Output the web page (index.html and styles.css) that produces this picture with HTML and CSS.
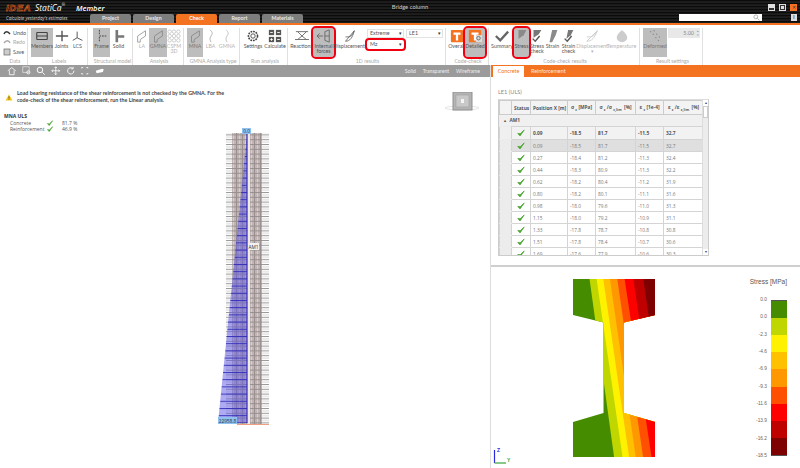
FILE: index.html
```html
<!DOCTYPE html>
<html lang="en">
<head>
<meta charset="utf-8">
<title>Bridge column</title>
<link rel="stylesheet" href="styles.css">
</head>
<body>
<svg class="defs" width="0" height="0">
  <symbol id="check" viewBox="0 0 10 10"><path d="M1 5.5 L3.8 8.6 L9 1.2 L4 6 Z" fill="#4aa52f" stroke="#4aa52f" stroke-width="1"/></symbol>
</svg>
<div class="app">
  <header class="titlebar">
    <div class="brand">
      <div class="brand-row"><span class="idea">IDEA</span><span class="statica">StatiCa<sup>®</sup></span><span class="member">Member</span></div>
      <div class="tagline">Calculate yesterday's estimates</div>
    </div>
    <nav class="tabs">
      <span class="tab">Project</span><span class="tab">Design</span><span class="tab active">Check</span><span class="tab">Report</span><span class="tab">Materials</span>
    </nav>
    <div class="doc-title">Bridge column</div>
    <div class="winbox">
      <div class="winbtns">
        <span class="winbtn"><i class="w-min"></i></span><span class="winbtn"><i class="w-max"></i></span><span class="winbtn close">✕</span>
      </div>
      <div class="searchrow">
        <div class="search"><svg viewBox="0 0 8 8" class="search-ico"><circle cx="3.2" cy="3.2" r="2.2" fill="none" stroke="#aaa"/><path d="M5 5l2.4 2.4" stroke="#aaa"/></svg></div>
        <span class="info">i</span>
      </div>
    </div>
  </header>

  <section class="ribbon">
    <div class="group g-data">
      <div class="rows">
        <div class="mini"><svg viewBox="0 0 8 6"><path d="M1 4C2 1 5 1 7 4" fill="none" stroke="#333" stroke-width="1.4"/></svg>Undo</div>
        <div class="mini off"><svg viewBox="0 0 8 6"><path d="M1 4C3 1 6 1 7 4" fill="none" stroke="#aaa" stroke-width="1.4"/></svg>Redo</div>
        <div class="mini"><svg viewBox="0 0 8 8"><rect x="1" y="1" width="6" height="6" fill="#ccc" stroke="#666" stroke-width=".7"/></svg>Save</div>
      </div>
      <div class="glabel">Data</div>
    </div>
    <div class="group g-labels">
      <div class="btns">
        <div class="btn w22 on"><svg class="ico" viewBox="0 0 20 16"><path d="M4 8h12M4 4v8M16 4v8M4 4h12M4 12h12" stroke="#444" stroke-width="1.3" fill="none"/></svg><span>Members</span></div>
        <div class="btn w17"><svg class="ico" viewBox="0 0 20 16"><path d="M10 2v12M3 8h14" stroke="#555" stroke-width="1.6"/></svg><span>Joints</span></div>
        <div class="btn w15"><svg class="ico" viewBox="0 0 20 16"><path d="M9 10V3M9 10l6 3M9 10l-5 3" stroke="#444" stroke-width="1" fill="none"/></svg><span>LCS</span></div>
      </div>
      <div class="glabel">Labels</div>
    </div>
    <div class="group g-struct">
      <div class="btns">
        <div class="btn w17 on"><svg class="ico" viewBox="0 0 20 16"><path d="M7 1v5M7 9v6M7 8h8" stroke="#444" stroke-width="1.1" stroke-dasharray="2 1" fill="none"/></svg><span>Frame</span></div>
        <div class="btn w17"><svg class="ico" viewBox="0 0 20 16"><path d="M6 1h3v6h7v3H9v5H6z" fill="#777"/></svg><span>Solid</span></div>
      </div>
      <div class="glabel">Structural model</div>
    </div>
    <div class="group g-analysis">
      <div class="btns">
        <div class="btn w14 off"><svg class="ico" viewBox="0 0 20 16"><path d="M5 15V8l9-6v6L8 12v3z" fill="none" stroke="#999"/></svg><span>LA</span></div>
        <div class="btn w18 on off2"><svg class="ico" viewBox="0 0 20 16"><path d="M6 15V8l9-6v6L9 12v3z" fill="none" stroke="#888"/></svg><span>GMNA</span></div>
        <div class="btn w14 off"><svg class="ico" viewBox="0 0 20 16"><g fill="none" stroke="#bbb" stroke-width=".8"><circle cx="5" cy="3" r="2"/><circle cx="10" cy="3" r="2"/><circle cx="15" cy="3" r="2"/><circle cx="5" cy="8" r="2"/><circle cx="10" cy="8" r="2"/><circle cx="15" cy="8" r="2"/><circle cx="5" cy="13" r="2"/><circle cx="10" cy="13" r="2"/><circle cx="15" cy="13" r="2"/></g></svg><span>CSFM<br>3D</span></div>
      </div>
      <div class="glabel">Analysis</div>
    </div>
    <div class="group g-type">
      <div class="btns">
        <div class="btn w16 on off2"><svg class="ico" viewBox="0 0 20 16"><path d="M6 15V8l9-6v6L9 12v3z" fill="none" stroke="#888"/></svg><span>MNA</span></div>
        <div class="btn w15 off"><svg class="ico" viewBox="0 0 20 16"><path d="M9 1c3 3 3 4 1 7s-1 5 0 7" fill="none" stroke="#aaa"/></svg><span>LBA</span></div>
        <div class="btn w18 off"><svg class="ico" viewBox="0 0 20 16"><path d="M9 1c3 3 3 4 1 7s-1 5 0 7" fill="none" stroke="#bbb"/></svg><span>GMNA</span></div>
      </div>
      <div class="glabel">GMNA Analysis type</div>
    </div>
    <div class="group g-run">
      <div class="btns">
        <div class="btn w20"><svg class="ico" viewBox="0 0 20 16"><circle cx="10" cy="8" r="5.2" fill="none" stroke="#444" stroke-width="1.8" stroke-dasharray="2 1"/><circle cx="10" cy="8" r="2.5" fill="none" stroke="#444"/></svg><span>Settings</span></div>
        <div class="btn w24"><svg class="ico" viewBox="0 0 20 16"><g fill="#555"><rect x="3" y="1" width="6" height="6"/><rect x="11" y="1" width="6" height="6"/><rect x="3" y="9" width="6" height="6"/><rect x="11" y="9" width="6" height="6"/></g><path d="M4.500 4h3M12.500 4h3M6 10.500v3M4.500 12h3M12.500 12h3" stroke="#fff"/></svg><span>Calculate</span></div>
      </div>
      <div class="glabel">Run analysis</div>
    </div>
    <div class="group g-1d">
      <div class="btns">
        <div class="btn w23"><svg class="ico" viewBox="0 0 20 16"><path d="M3 3h14M5 3l5 5 5-5M2 12h16M5 12l5-4 5 4" fill="none" stroke="#666"/></svg><span>Reactions</span></div>
        <div class="btn w21 on hl"><svg class="ico" viewBox="0 0 20 16"><path d="M2 8h7M5 5L2 8l3 3M11 3l5-2v14l-5-2zM11 8h5" fill="none" stroke="#666"/></svg><span>Internal<br>forces</span></div>
        <div class="btn w30"><svg class="ico" viewBox="0 0 20 16"><path d="M6 14L16 2M6 9c4 0 7 1 10-7M6 14c5 0 8-4 10-12" fill="none" stroke="#666"/></svg><span>Displacement</span></div>
        <div class="combos">
          <div class="combo-row"><div class="combo">Extreme</div><div class="combo">LE1</div></div>
          <div class="combo-row"><div class="combo hl2">Mz</div></div>
        </div>
      </div>
      <div class="glabel">1D results</div>
    </div>
    <div class="group g-code">
      <div class="btns">
        <div class="btn w17"><svg class="ico" viewBox="0 0 20 16"><rect x="3" y="1" width="14" height="14" rx="1" fill="#f47321"/><path d="M6 4h8v2.500h-2.700V13H8.700V6.500H6z" fill="#fff"/></svg><span>Overall</span></div>
        <div class="btn w20 on hl"><svg class="ico" viewBox="0 0 20 16"><rect x="3" y="1" width="14" height="14" rx="1" fill="#f47321"/><path d="M6 4h8v2.500h-2.700V13H8.700V6.500H6z" fill="#fff"/><rect x="11" y="7" width="7" height="8" fill="#ddd"/><circle cx="14" cy="10.500" r="2" fill="none" stroke="#666"/></svg><span>Detailed</span></div>
      </div>
      <div class="glabel">Code-check</div>
    </div>
    <div class="group g-res">
      <div class="btns">
        <div class="btn w22"><svg class="ico" viewBox="0 0 20 16"><path d="M3 8l5 5L17 3" fill="none" stroke="#666" stroke-width="2.600"/></svg><span>Summary</span></div>
        <div class="btn w15 on hl"><svg class="ico" viewBox="0 0 20 16"><path d="M6 15V1h9l-3 6-6 4z" fill="#8a8a8a"/></svg><span>Stress</span></div>
        <div class="btn w16"><svg class="ico" viewBox="0 0 20 16"><path d="M6 11V1h9l-3 5-6 4z" fill="#777"/><path d="M5 11l3 3 5-6" fill="none" stroke="#555" stroke-width="1.600"/></svg><span>Stress<br>check</span></div>
        <div class="btn w15"><svg class="ico" viewBox="0 0 20 16"><path d="M6 15L9 1h6l-2 6-4 8z" fill="#8a8a8a"/></svg><span>Strain</span></div>
        <div class="btn w17"><svg class="ico" viewBox="0 0 20 16"><path d="M7 11L9 1h6l-3 6z" fill="#777"/><path d="M5 11l3 3 5-6" fill="none" stroke="#555" stroke-width="1.600"/></svg><span>Strain<br>check</span></div>
        <div class="btn w30 off"><svg class="ico" viewBox="0 0 20 16"><path d="M4 14L16 2M4 9c4 0 8 1 12-7M4 14c6 0 9-4 12-12" fill="none" stroke="#ccc"/></svg><span>Displacement<br>▾</span></div>
        <div class="btn w29 off"><svg class="ico" viewBox="0 0 20 16"><path d="M10 1c2 2 6 5 6 9a6 5 0 0 1-12 0c0-4 4-7 6-9z" fill="#ccc"/></svg><span>Temperature</span></div>
      </div>
      <div class="glabel">Code-check results</div>
    </div>
    <div class="group g-set">
      <div class="btns">
        <div class="btn w24 on off2"><svg class="ico" viewBox="0 0 20 16"><g fill="#888"><circle cx="5" cy="3" r=".8"/><circle cx="9" cy="2" r=".8"/><circle cx="8" cy="6" r=".8"/><circle cx="12" cy="6" r=".8"/><circle cx="11" cy="10" r=".8"/><circle cx="15" cy="9" r=".8"/><circle cx="14" cy="13" r=".8"/></g></svg><span>Deformed</span></div>
        <div class="spin"><span>5.00</span><i>▴<br>▾</i></div>
      </div>
      <div class="glabel">Result settings</div>
    </div>
  </section>

  <main class="split">
    <section class="left">
      <div class="vbar">
        <div class="vicons">
          <svg viewBox="0 0 12 12"><path d="M1 6l5-4 5 4M3 5.500V11h6V5.500" fill="none" stroke="#fff"/></svg>
          <svg viewBox="0 0 12 12"><rect x="1" y="1" width="8" height="7" fill="none" stroke="#ddd"/><circle cx="8" cy="8" r="2" fill="none" stroke="#fff"/></svg>
          <svg viewBox="0 0 12 12"><circle cx="5" cy="5" r="3.500" fill="none" stroke="#fff" stroke-width="1.200"/><path d="M8 8l3 3" stroke="#fff" stroke-width="1.200"/></svg>
          <svg viewBox="0 0 12 12"><path d="M6 1v10M1 6h10M4.500 2.500L6 1l1.500 1.500M4.500 9.500L6 11l1.500-1.500M2.500 4.500L1 6l1.500 1.500M9.500 4.500L11 6 9.500 7.500" fill="none" stroke="#fff"/></svg>
          <svg viewBox="0 0 12 12"><path d="M10 6a4 4 0 1 1-1.500-3M9 1v2.500H6.500" fill="none" stroke="#fff" stroke-width="1.100"/></svg>
          <svg viewBox="0 0 12 12"><path d="M2 2h2M8 2h2M2 10h2M8 10h2M2 2v1M10 2v1M2 9v1M10 9v1" fill="none" stroke="#fff" stroke-width="1.100"/></svg>
          <svg viewBox="0 0 12 12"><path d="M1 6l8-2.500 2 .5-1 3.500-8 1.500z" fill="#fff"/></svg>
        </div>
        <div class="vmodes"><span>Solid</span><span>Transparent</span><span>Wireframe</span></div>
      </div>
      <div class="viewport">
        <div class="warning">
          <svg class="warn-ico" viewBox="0 0 10 9"><path d="M5 .5L9.500 8.500H.5z" fill="#f5c518"/><path d="M5 3v3M5 6.800v.8" stroke="#333" stroke-width=".9"/></svg>
          <p>Load bearing resistance of the shear reinforcement is not checked by the GMNA. For the<br>code-check of the shear reinforcement, run the Linear analysis.</p>
        </div>
        <div class="summary">
          <div class="sum-title">MNA ULS</div>
          <div class="sum-row"><span class="sum-name">Concrete</span><svg class="chk"><use href="#check"/></svg><span>81.7 %</span></div>
          <div class="sum-row"><span class="sum-name">Reinforcement</span><svg class="chk"><use href="#check"/></svg><span>46.9 %</span></div>
        </div>
        <svg class="cube" viewBox="0 0 36 22">
          <ellipse cx="18" cy="16" rx="17" ry="2" fill="none" stroke="#ddd" stroke-width=".8"/>
          <rect x="9" y="0" width="19" height="18" fill="#b4b4b4" stroke="#8f8f8f" stroke-width="1"/>
          <rect x="12" y="3" width="13" height="12" fill="#c8c8c8" stroke="#a0a0a0" stroke-width=".6"/>
          <rect x="17" y="7" width="3" height="4" fill="#f4f4f4"/>
        </svg>
        <svg class="beam" viewBox="0 0 70 310" width="70" height="310">
          <defs>
            <pattern id="hl" width="4" height="4.800" patternUnits="userSpaceOnUse"><rect width="4" height="4.800" fill="#fff"/><rect width="4" height="1" y="0" fill="#9a9a9a"/><rect width="4" height="1" y="2.400" fill="#d6d6d6"/></pattern>
            <pattern id="vl" width="6" height="4.800" patternUnits="userSpaceOnUse"><rect width="6" height="4.800" fill="#c0b4b4"/><rect width="1" height="4.800" x="1" fill="#9c8f8f"/><rect width="1" height="4.800" x="4" fill="#d8cece"/><rect width="6" height="1" y="0" fill="#979090"/></pattern>
            <pattern id="bl" width="4" height="7.200" patternUnits="userSpaceOnUse"><rect width="4" height="7.200" fill="#5e58e6" fill-opacity=".5"/><rect width="4" height="1" y="0" fill="#2a24b8" fill-opacity=".85"/></pattern>
          </defs>
          <rect x="21" y="13" width="43" height="291" fill="url(#hl)"/>
          <rect x="27" y="13" width="30" height="291" fill="url(#vl)"/>
          <rect x="42.500" y="13" width="2.500" height="291" fill="#efe9e9"/>
          <path d="M42 14L13 303H42Z" fill="url(#bl)"/>
          <path d="M42 13V303" stroke="#2a24b8" stroke-width="1"/>
          <path d="M32 304.500H64" stroke="#f0a080" stroke-width="1"/>
          <rect x="37" y="8" width="9" height="6" fill="#8ec2f2"/>
          <text x="41.500" y="13" class="bt" text-anchor="middle">0.0</text>
          <rect x="43" y="123" width="11" height="7" fill="#f1f1f1"/>
          <text x="48.500" y="128.500" class="bt" text-anchor="middle">AM1</text>
          <rect x="13" y="297" width="19" height="7" fill="#8ec2f2"/>
          <text x="22.500" y="302.500" class="bt" text-anchor="middle">22958.8</text>
        </svg>
      </div>
    </section>

    <section class="right">
      <div class="rtabs"><span class="rtab active">Concrete</span><span class="rtab">Reinforcement</span></div>
      <div class="rtop">
        <div class="le">LE1 (ULS)</div>
        <div class="tablewrap">
          <table>
            <colgroup><col class="c0"><col class="c1"><col class="c2"><col class="c3"><col class="c4"><col class="c5"><col class="c6"></colgroup>
            <thead><tr><th></th><th>Status</th><th>Position X [m]</th><th>σ <sub>c</sub> [MPa]</th><th>σ <sub>c</sub> /σ <sub>c,lim</sub> &nbsp;[%]</th><th>ε <sub>c</sub> [1e-4]</th><th>ε <sub>c</sub> /ε <sub>c,lim</sub> &nbsp;[%]</th></tr></thead>
            <tbody>
              <tr class="grp"><td colspan="7"><span class="caret">▴</span>AM1</td></tr>
              <tr class="total"><td class="blank"></td><td class="st"><svg class="chk"><use href="#check"/></svg></td><td>0.09</td><td>-18.5</td><td>81.7</td><td>-11.5</td><td>32.7</td></tr>
              <tr class="sel"><td class="blank"></td><td class="st"><svg class="chk"><use href="#check"/></svg></td><td>0.09</td><td>-18.5</td><td>81.7</td><td>-11.5</td><td>32.7</td></tr>
              <tr><td class="blank"></td><td class="st"><svg class="chk"><use href="#check"/></svg></td><td>0.27</td><td>-18.4</td><td>81.2</td><td>-11.3</td><td>32.4</td></tr>
              <tr><td class="blank"></td><td class="st"><svg class="chk"><use href="#check"/></svg></td><td>0.44</td><td>-18.3</td><td>80.9</td><td>-11.3</td><td>32.2</td></tr>
              <tr><td class="blank"></td><td class="st"><svg class="chk"><use href="#check"/></svg></td><td>0.62</td><td>-18.2</td><td>80.4</td><td>-11.2</td><td>31.9</td></tr>
              <tr><td class="blank"></td><td class="st"><svg class="chk"><use href="#check"/></svg></td><td>0.80</td><td>-18.2</td><td>80.1</td><td>-11.1</td><td>31.6</td></tr>
              <tr><td class="blank"></td><td class="st"><svg class="chk"><use href="#check"/></svg></td><td>0.98</td><td>-18.0</td><td>79.6</td><td>-11.0</td><td>31.3</td></tr>
              <tr><td class="blank"></td><td class="st"><svg class="chk"><use href="#check"/></svg></td><td>1.15</td><td>-18.0</td><td>79.2</td><td>-10.9</td><td>31.1</td></tr>
              <tr><td class="blank"></td><td class="st"><svg class="chk"><use href="#check"/></svg></td><td>1.33</td><td>-17.8</td><td>78.7</td><td>-10.8</td><td>30.8</td></tr>
              <tr><td class="blank"></td><td class="st"><svg class="chk"><use href="#check"/></svg></td><td>1.51</td><td>-17.8</td><td>78.4</td><td>-10.7</td><td>30.6</td></tr>
              <tr><td class="blank"></td><td class="st"><svg class="chk"><use href="#check"/></svg></td><td>1.69</td><td>-17.6</td><td>77.9</td><td>-10.6</td><td>30.3</td></tr>
            </tbody>
          </table>
          <div class="sbar"><span class="sb-up">▴</span><span class="sb-thumb"></span><span class="sb-down">▾</span></div>
        </div>
      </div>
      <div class="rbottom">
        <svg class="section" viewBox="0 0 200 203" width="200" height="203">
          <defs><clipPath id="isec"><path d="M83 14H165V50L134 57.500V148L165 157V192H83V157L113.500 148V57.500L83 50Z"/></clipPath></defs>
          <g clip-path="url(#isec)">
            <rect x="80" y="10" width="90" height="190" fill="#468c00"/>
            <path d="M99 10L124.500 195H170V10Z" fill="#bfd600"/>
            <path d="M106 10L133 195H170V10Z" fill="#fff200"/>
            <path d="M112.700 10L139.500 195H170V10Z" fill="#ffc000"/>
            <path d="M119.300 10L146.200 195H170V10Z" fill="#ff9800"/>
            <path d="M126.700 10L153.500 195H170V10Z" fill="#ff4f00"/>
            <path d="M134 10L162 195H170V10Z" fill="#ff0000"/>
            <path d="M142.700 10L170 195V10Z" fill="#bf0000"/>
            <path d="M152.700 10L170 130V10Z" fill="#7f0000"/>
          </g>
          <path d="M4.500 198V185" stroke="#2a2ae0" stroke-width="1.200"/>
          <path d="M4.500 198H16" stroke="#3aa53a" stroke-width="1.200"/>
          <text x="7" y="187" class="axis az">Z</text>
          <text x="17" y="197" class="axis ay">Y</text>
        </svg>
        <div class="legend">
          <div class="leg-title">Stress [MPa]</div>
          <div class="leg-body">
            <div class="leg-labels"><span>0.0</span><span>0.0</span><span>-2.3</span><span>-4.6</span><span>-6.9</span><span>-9.3</span><span>-11.6</span><span>-13.9</span><span>-16.2</span><span>-18.5</span></div>
            <div class="leg-bar"><i class="l1"></i><i class="l2"></i><i class="l3"></i><i class="l4"></i><i class="l5"></i><i class="l6"></i><i class="l7"></i><i class="l8"></i><i class="l9"></i></div>
          </div>
        </div>
      </div>
    </section>
  </main>
</div>
</body>
</html>
```
FILE: styles.css
```css
* { box-sizing: border-box; }
html, body { margin: 0; padding: 0; }
body { width: 800px; height: 468px; overflow: hidden; background: #fff; font-family: Lato, "Open Sans", sans-serif; font-size: 5.500px; color: #555; }
.defs { position: absolute; }
.app { width: 800px; height: 468px; display: flex; flex-direction: column; }

/* Title bar */
.titlebar { height: 25px; flex: none; display: flex; position: relative; background: repeating-linear-gradient(180deg, #0b0b0b 0, #0b0b0b 1px, #2a2a2a 2px, #141414 3px); border-bottom: 2px solid #f47321; }
.brand { width: 90px; flex: none; padding: 2px 0 0 6px; color: #fff; }
.brand-row { display: flex; align-items: baseline; height: 11px; font-style: italic; white-space: nowrap; }
.brand-row span { flex: none; }
.idea { font: italic 700 9.500px "Liberation Sans", sans-serif; letter-spacing: .6px; color: #111; -webkit-text-stroke: .5px #f47321; width: 29px; }
.statica { font: italic 400 8.500px "Open Sans", sans-serif; width: 41px; }
.statica sup { font-size: 4px; vertical-align: top; }
.member { font: italic 600 7.500px "Open Sans", sans-serif; }
.tagline { font: italic 400 4.500px "Open Sans", sans-serif; margin-top: 2px; white-space: nowrap; color: #ddd; }
.tabs { display: flex; align-items: flex-end; gap: 2px; height: 23px; }
.tab { width: 41px; height: 9px; background: #7d7d7d; border-radius: 2px 2px 0 0; color: #e8e8e8; font-size: 5.300px; font-weight: 700; line-height: 9px; text-align: center; }
.tab.active { background: #f47321; color: #fff; }
.doc-title { position: absolute; left: 380px; top: 3px; width: 60px; text-align: center; color: #ccc; font-size: 5.800px; line-height: 8px; white-space: nowrap; }
.winbox { margin-left: auto; width: 124px; padding: 4px 3px 0 0; display: flex; flex-direction: column; }
.winbtns { display: flex; justify-content: flex-end; gap: 4px; height: 10px; }
.winbtn { width: 7px; height: 7px; background: #ddd; display: flex; align-items: center; justify-content: center; color: #333; font-size: 5px; line-height: 7px; }
.winbtn.close { background: #f47321; }
.w-min { width: 5px; height: 1.500px; background: #333; margin-top: 3px; }
.w-max { width: 5px; height: 5px; border: 1px solid #333; }
.searchrow { display: flex; justify-content: flex-end; align-items: center; gap: 29px; }
.search { width: 83px; height: 7px; background: #fff; display: flex; justify-content: flex-end; padding-right: 2px; }
.search-ico { width: 7px; height: 7px; }
.info { width: 6px; height: 7px; background: #ddd; color: #333; font-size: 5px; line-height: 7px; text-align: center; font-weight: 700; }

/* Ribbon */
.ribbon { height: 40px; flex: none; display: flex; background: #fff; padding-top: 3px; }
.group { flex: none; display: flex; flex-direction: column; border-right: 1px solid #e0e0e0; height: 37px; }
.g-data { width: 28px; padding-left: 3px; }
.g-labels { width: 60px; padding-left: 3px; }
.g-struct { width: 45px; padding-left: 5px; }
.g-analysis { width: 51px; padding-left: 2px; }
.g-type { width: 56px; padding-left: 3px; }
.g-run { width: 48px; padding-left: 3px; }
.g-1d { width: 158px; padding-left: 2px; }
.g-code { width: 43px; padding-left: 2px; }
.g-res { width: 151px; padding-left: 2px; }
.g-set { width: 63px; padding-left: 3px; }
.btns { display: flex; flex: 1; min-height: 0; }
.rows { flex: 1; }
.mini { display: flex; align-items: center; gap: 2px; height: 9.500px; color: #555; white-space: nowrap; font-size: 5.400px; }
.mini svg { width: 8px; height: 8px; flex: none; }
.mini.off { color: #aaa; }
.glabel { height: 8px; flex: none; text-align: center; color: #aaa; font-size: 5.200px; line-height: 8px; white-space: nowrap; }
.btn { flex: none; height: 29px; display: flex; flex-direction: column; align-items: center; color: #555; font-size: 5.300px; line-height: 5.500px; text-align: center; white-space: nowrap; padding-top: 1px; }
.btn span { display: block; }
.ico { width: 18px; height: 14px; flex: none; margin-bottom: .500px; }
.btn.on { background: #bdbdbd; }
.btn.off { color: #b5b5b5; }
.btn.off2 { color: #777; }
.btn.hl { outline: 2px solid #f00010; outline-offset: 0; border-radius: 3px; }
.w14 { width: 14px; } .w15 { width: 15px; } .w16 { width: 16px; } .w17 { width: 17px; } .w18 { width: 18px; }
.w20 { width: 20px; } .w21 { width: 21px; } .w22 { width: 22px; } .w23 { width: 23px; } .w24 { width: 24px; }
.w29 { width: 29px; } .w30 { width: 30px; }
.w22 + .w15.on { margin-left: 1px; }
.combos { display: flex; flex-direction: column; gap: 2px; margin-left: 3px; padding-top: 1px; }
.combo-row { display: flex; gap: 2px; }
.combo { width: 37px; height: 9px; border: 1px solid #e2e2e2; font-size: 5.400px; line-height: 7px; padding-left: 2px; position: relative; }
.combo::after { content: "▾"; position: absolute; right: 1px; top: 0; font-size: 5px; color: #333; }
.combo.hl2 { outline: 2px solid #f00010; border-radius: 2px; border-color: #fff; }
.spin { width: 32px; height: 10px; background: #e8e8e8; margin-left: 1px; font-size: 5.400px; line-height: 10px; text-align: right; display: flex; justify-content: flex-end; gap: 3px; color: #888; }
.spin i { font-style: normal; font-size: 3px; line-height: 4px; padding-top: 1px; padding-right: 1px; }

/* Split */
.split { flex: 1; min-height: 0; display: grid; grid-template-columns: 490px 310px; }
.left { display: flex; flex-direction: column; min-height: 0; }
.vbar { height: 12px; flex: none; background: #9b9b9b; display: flex; align-items: center; justify-content: space-between; padding: 0 10px 0 7px; }
.vicons { display: flex; gap: 5.200px; }
.vicons svg { width: 9.500px; height: 9.500px; }
.vmodes { display: flex; gap: 7px; color: #f0f0f0; font-size: 5.100px; }
.viewport { flex: 1; position: relative; background: #fff; min-height: 0; }
.warning { display: flex; gap: 4px; padding: 13px 0 0 5px; align-items: center; }
.warn-ico { width: 8px; height: 7px; flex: none; }
.warning p { margin: 0; font-size: 5.300px; line-height: 7px; font-weight: 700; color: #444; white-space: nowrap; }
.summary { padding: 9px 0 0 4px; font: 400 5px/6.500px "Open Sans", sans-serif; }
.sum-title { font-weight: 700; color: #333; }
.sum-row { display: flex; align-items: center; padding-left: 6px; color: #555; }
.sum-name { width: 36px; }
.chk { width: 8px; height: 8px; }
.sum-row .chk { margin-right: 8px; height: 6.500px; }
.cube { position: absolute; left: 444px; top: 15px; width: 36px; height: 22px; }
.beam { position: absolute; left: 205px; top: 43px; }
.bt { font-size: 4.800px; fill: #333; font-family: "Open Sans", sans-serif; }

/* Right */
.right { display: flex; flex-direction: column; min-height: 0; border-left: 1px solid #ddd; }
.rtabs { height: 12px; flex: none; background: #f47321; display: flex; align-items: flex-end; padding-left: 2px; font-size: 5.400px; }
.rtab { height: 11px; line-height: 11px; padding: 0 7px; color: #ffe8d8; white-space: nowrap; }
.rtab.active { background: #fff; color: #f47321; width: 31px; padding: 0; text-align: center; }
.rtop { height: 190px; flex: none; padding: 0 0 0 7px; border-bottom: 2px solid #cfcfcf; }
.le { height: 22px; padding-top: 11px; color: #888; font-size: 5.600px; line-height: 7px; }
.tablewrap { position: relative; width: 211px; height: 157px; border: 1px solid #ccc; border-top-color: #ddd; overflow: hidden; background: #ececec; }
table { border-collapse: collapse; table-layout: fixed; width: 204px; font: 400 4.800px "Open Sans", sans-serif; }
col.c0 { width: 12px; } col.c1 { width: 19px; } col.c2 { width: 37px; } col.c3 { width: 28px; } col.c4 { width: 40px; } col.c5 { width: 28px; } col.c6 { width: 40px; }
th { height: 14px; padding: 0 2px; background: #f3f3f3; border: 1px solid #ccc; font-weight: 700; color: #555; white-space: nowrap; text-align: center; }
th sub { font-size: 3.500px; }
td { height: 12px; padding: 0 0 0 2px; background: #fff; border: 1px solid #d4d4d4; color: #777; line-height: 10px; white-space: nowrap; }
td.st { text-align: center; padding: 0; }
td.st .chk { display: block; margin: 0 auto; }
td.blank { background: #ececec; border-top-color: #ececec; border-bottom-color: #ececec; }
tr.grp td { height: 12px; background: #f0f0f0; border: 0; font-weight: 700; color: #555; padding-left: 4px; }
.caret { margin-right: 4px; font-size: 4px; }
tr.total td { background: #f2f2f2; font-weight: 700; color: #555; height: 13px; }
tr.total td.blank { background: #f0f0f0; }
tr.sel td { background: #dfdfdf; }
tr.sel td.blank { background: #ececec; border-top-color: #ccc; }
.sbar { position: absolute; right: 0; top: 0; bottom: 0; width: 6px; background: #ececec; border-left: 1px solid #ddd; display: flex; flex-direction: column; align-items: center; }
.sb-up, .sb-down { height: 6px; width: 5px; background: #fff; color: #444; font-size: 4px; line-height: 6px; text-align: center; flex: none; }
.sb-thumb { width: 5px; height: 12px; background: #fff; border: 1px solid #ccc; flex: none; }
.sb-down { margin-top: auto; }
.rbottom { flex: 1; min-height: 0; display: flex; position: relative; }
.section { flex: none; margin-left: -1px; margin-top: -2px; }
.axis { font-size: 5px; font-weight: 700; font-family: "Liberation Sans", sans-serif; }
.az { fill: #2a2ae0; } .ay { fill: #3aa53a; }
.legend { width: 110px; flex: none; display: flex; flex-direction: column; align-items: flex-end; padding-right: 13px; }
.leg-title { margin-top: 10px; height: 22px; font: 400 6.500px/10px "Liberation Sans", sans-serif; color: #555; white-space: nowrap; }
.leg-body { display: flex; gap: 4px; margin-top: 1px; }
.leg-labels { height: 164px; margin-top: -4px; display: flex; flex-direction: column; justify-content: space-between; align-items: flex-end; font: 400 4.800px/8px "Liberation Sans", sans-serif; color: #666; }
.leg-bar { width: 16px; height: 156px; display: flex; flex-direction: column; border: 1px solid #555; border-width: 1px 0; }
.leg-bar i { flex: 1; display: block; }
.l1 { background: #468c00; } .l2 { background: #bfd600; } .l3 { background: #fff200; } .l4 { background: #ffc000; } .l5 { background: #ff9800; } .l6 { background: #ff4f00; } .l7 { background: #ff0000; } .l8 { background: #bf0000; } .l9 { background: #7f0000; }
```
